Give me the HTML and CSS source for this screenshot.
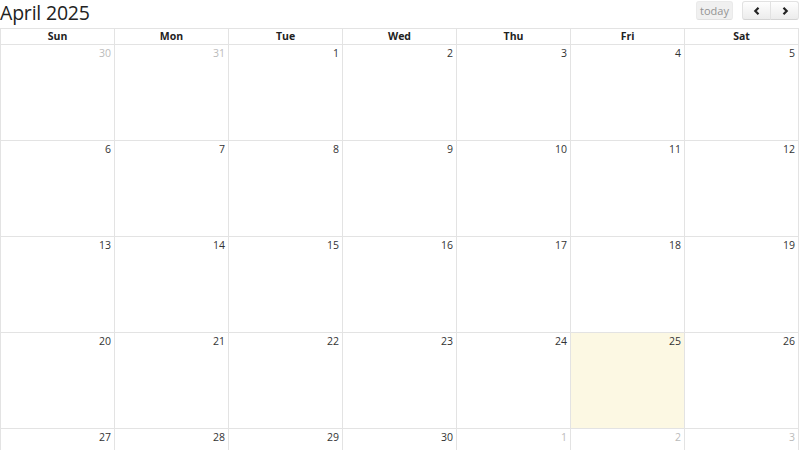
FILE: index.html
```html
<!DOCTYPE html>
<html>
<head>
<meta charset="utf-8">
<link rel="stylesheet" href="styles.css">
</head>
<body>
<div class="cal">
  <div class="toolbar">
    <h2 class="title">April 2025</h2>
    <div class="buttons">
      <button class="btn today" disabled>today</button>
      <div class="group">
        <button class="btn nav left"><svg width="10" height="10" viewBox="0 0 10 10"><path d="M6.5 1.8 L3.3 5 L6.5 8.2" fill="none" stroke="#222" stroke-width="2.2"/></svg></button>
        <button class="btn nav right"><svg width="10" height="10" viewBox="0 0 10 10"><path d="M3.5 1.8 L6.7 5 L3.5 8.2" fill="none" stroke="#222" stroke-width="2.2"/></svg></button>
      </div>
    </div>
  </div>
  <div class="grid">
    <div class="head">Sun</div><div class="head">Mon</div><div class="head">Tue</div><div class="head">Wed</div><div class="head">Thu</div><div class="head">Fri</div><div class="head">Sat</div>
    <div class="day other">30</div><div class="day other">31</div><div class="day">1</div><div class="day">2</div><div class="day">3</div><div class="day">4</div><div class="day">5</div>
    <div class="day">6</div><div class="day">7</div><div class="day">8</div><div class="day">9</div><div class="day">10</div><div class="day">11</div><div class="day">12</div>
    <div class="day">13</div><div class="day">14</div><div class="day">15</div><div class="day">16</div><div class="day">17</div><div class="day">18</div><div class="day">19</div>
    <div class="day">20</div><div class="day">21</div><div class="day">22</div><div class="day">23</div><div class="day">24</div><div class="day today-cell">25</div><div class="day">26</div>
    <div class="day">27</div><div class="day">28</div><div class="day">29</div><div class="day">30</div><div class="day other">1</div><div class="day other">2</div><div class="day other">3</div>
  </div>
</div>
</body>
</html>
```
FILE: styles.css
```css
html, body {
  margin: 0;
  padding: 0;
  background: #fff;
  overflow: hidden;
}
body {
  font-family: "Open Sans", "Noto Sans", sans-serif;
  color: #333;
}
.cal {
  width: 799px;
  height: 450px;
  overflow: hidden;
}
.toolbar {
  height: 28px;
  display: flex;
  justify-content: space-between;
  align-items: flex-start;
}
.title {
  margin: 0;
  font-size: 19.5px;
  font-weight: 400;
  line-height: 26px;
  color: #222;
  letter-spacing: -0.2px;
}
.buttons {
  display: flex;
  gap: 9px;
  padding-top: 1px;
}
.group {
  display: flex;
}
.btn {
  height: 19px;
  margin: 0;
  padding: 0 6px;
  font-family: inherit;
  font-size: 11px;
  line-height: 17px;
  color: #333;
  border: 1px solid #e2e2e2;
  border-bottom-color: #d4d4d4;
  background: linear-gradient(#fefefe, #ececec);
  border-radius: 3px;
  display: flex;
  align-items: center;
  justify-content: center;
}
.btn.today {
  width: 37px;
  opacity: 0.7;
  color: #666;
  background: #eaeaea;
}
.btn.nav {
  width: 29px;
  padding: 0;
}
.btn.left {
  border-radius: 3px 0 0 3px;
}
.btn.right {
  border-radius: 0 3px 3px 0;
  margin-left: -1px;
}
.grid {
  display: grid;
  grid-template-columns: repeat(7, 1fr);
  grid-template-rows: 16px repeat(6, 96px);
  border-left: 1px solid #e3e3e3;
  border-top: 1px solid #e3e3e3;
}
.head, .day {
  border-right: 1px solid #e3e3e3;
  border-bottom: 1px solid #e3e3e3;
}
.head {
  font-size: 10.5px;
  font-weight: 700;
  text-align: center;
  line-height: 15px;
  color: #222;
}
.day {
  font-size: 10.5px;
  text-align: right;
  padding: 1px 3px 0 0;
  line-height: 14px;
  color: #333;
}
.day.other {
  color: #bbb;
}
.day.today-cell {
  background: #fcf8e3;
}
```
